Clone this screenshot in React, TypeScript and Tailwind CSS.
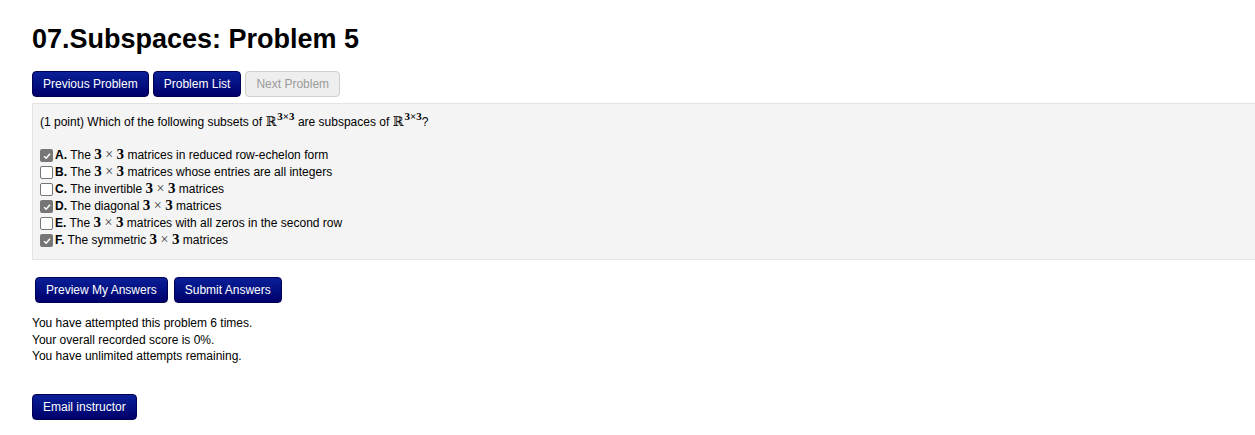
import React from "react";

const navyBtn =
  "h-[26px] rounded-[4px] border border-[#000050] bg-linear-to-b from-[#0b1f98] to-[#00006b] px-[10px] text-[12px] leading-[24px] text-white";

function Box({ checked }: { checked: boolean }) {
  return (
    <span
      className={
        checked
          ? "mr-[2px] inline-flex h-[13px] w-[13px] items-center justify-center rounded-[2px] bg-[#767676] align-middle"
          : "mr-[2px] inline-flex h-[13px] w-[13px] items-center justify-center rounded-[2px] border border-[#767676] bg-white align-middle"
      }
    >
      {checked ? (
        <svg viewBox="0 0 12 12" className="h-[10px] w-[10px]">
          <path d="M2.5 6.2 L5 8.6 L9.6 3.4" fill="none" stroke="white" strokeWidth="1.8" />
        </svg>
      ) : null}
    </span>
  );
}

function M({ children }: { children: React.ReactNode }) {
  return (
    <span className="font-['Liberation_Serif',serif] text-[15px] font-bold leading-none">{children}</span>
  );
}

const times = (
  <>
    <M>3</M>
    <span className="font-['Liberation_Serif',serif] text-[14px] leading-none text-[#333]"> × </span>
    <M>3</M>
  </>
);

const options: { key: string; checked: boolean; text: React.ReactNode }[] = [
  { key: "A.", checked: true, text: <>The {times} matrices in reduced row-echelon form</> },
  { key: "B.", checked: false, text: <>The {times} matrices whose entries are all integers</> },
  { key: "C.", checked: false, text: <>The invertible {times} matrices</> },
  { key: "D.", checked: true, text: <>The diagonal {times} matrices</> },
  { key: "E.", checked: false, text: <>The {times} matrices with all zeros in the second row</> },
  { key: "F.", checked: true, text: <>The symmetric {times} matrices</> },
];

function Sup() {
  return (
    <>
      <span className="font-['DejaVu_Serif',serif] text-[13px] leading-none">ℝ</span>
      <span className="relative -top-[6px] ml-[1px] font-['Liberation_Serif',serif] text-[11px] font-bold leading-none">
        3×3
      </span>
    </>
  );
}

export default function App() {
  return (
    <div className="min-h-[435px] overflow-hidden bg-white pl-[32px] font-['Liberation_Sans',Arial,sans-serif] text-black">
      <h1 className="pt-[21px] text-[27px] font-bold leading-[36px]">07.Subspaces: Problem 5</h1>

      <div className="mt-[14px] flex gap-[4px]">
        <button className={navyBtn}>Previous Problem</button>
        <button className={navyBtn}>Problem List</button>
        <button className="h-[26px] rounded-[4px] border border-[#cfcfcf] bg-[#eeeeee] px-[10px] text-[12px] leading-[24px] text-[#9a9a9a]">
          Next Problem
        </button>
      </div>

      <div className="mr-[-20px] mt-[6px] h-[157px] border border-[#e3e3e3] bg-[#f4f4f4] px-[7px] pt-[10px] text-[12px] leading-[17px]">
        <p>
          (1 point) Which of the following subsets of <Sup /> are subspaces of <Sup />?
        </p>
        <div className="mt-[16px]">
          {options.map((o) => (
            <div key={o.key} className="h-[17px] whitespace-nowrap leading-[17px]">
              <Box checked={o.checked} />
              <b>{o.key}</b> {o.text}
            </div>
          ))}
        </div>
      </div>

      <div className="ml-[3px] mt-[17px] flex gap-[6px]">
        <button className={navyBtn}>Preview My Answers</button>
        <button className={navyBtn}>Submit Answers</button>
      </div>

      <div className="mt-[12px] text-[12px] leading-[16.5px]">
        <p>You have attempted this problem 6 times.</p>
        <p>Your overall recorded score is 0%.</p>
        <p>You have unlimited attempts remaining.</p>
      </div>

      <button className={`${navyBtn} mt-[29px]`}>Email instructor</button>
    </div>
  );
}
